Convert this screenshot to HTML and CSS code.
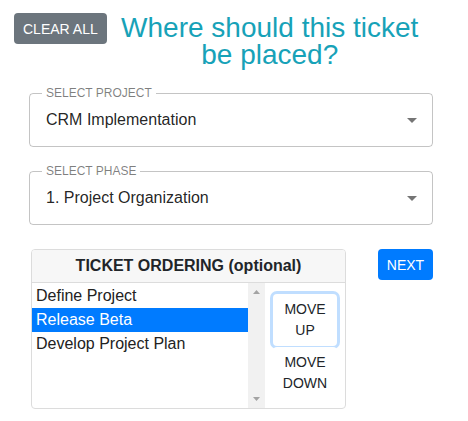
FILE: index.html
```html
<!DOCTYPE html>
<html>
<head>
<meta charset="utf-8">
<link rel="stylesheet" href="styles.css">
</head>
<body>
<div class="top">
  <button class="btn-clear">CLEAR ALL</button>
  <h2 class="title">Where should this ticket be placed?</h2>
</div>
<div class="form">
  <div class="field">
    <span class="field-label">SELECT PROJECT</span>
    <span class="field-value">CRM Implementation</span>
    <svg class="arrow" viewBox="0 0 24 24" width="24" height="24"><path d="M7 10l5 5 5-5z"/></svg>
  </div>
  <div class="field">
    <span class="field-label">SELECT PHASE</span>
    <span class="field-value">1. Project Organization</span>
    <svg class="arrow" viewBox="0 0 24 24" width="24" height="24"><path d="M7 10l5 5 5-5z"/></svg>
  </div>
</div>
<div class="bottom">
  <div class="panel">
    <div class="panel-head">TICKET ORDERING (optional)</div>
    <div class="panel-body">
      <div class="list">
        <div class="items">
          <div class="item">Define Project</div>
          <div class="item selected">Release Beta</div>
          <div class="item">Develop Project Plan</div>
        </div>
        <div class="scrollbar">
          <svg width="17" height="17" viewBox="0 0 17 17"><path d="M5 11h7l-3.5-4z" fill="#a3a3a3"/></svg>
          <svg width="17" height="17" viewBox="0 0 17 17"><path d="M5 6h7l-3.5 4z" fill="#a3a3a3"/></svg>
        </div>
      </div>
      <div class="actions">
        <button class="btn-move focused">MOVE<br>UP</button>
        <button class="btn-move">MOVE<br>DOWN</button>
      </div>
    </div>
  </div>
  <button class="btn-next">NEXT</button>
</div>
</body>
</html>
```
FILE: styles.css
```css
* { box-sizing: border-box; }
body {
  margin: 0;
  font-family: "Liberation Sans", Arial, sans-serif;
  color: #212529;
  background: #fff;
}
button { font-family: inherit; cursor: pointer; }
.top {
  display: flex;
  align-items: flex-start;
  padding: 12px 0 0 14px;
}
.btn-clear {
  margin-top: 1px;
  height: 31px;
  padding: 0 9px;
  border: none;
  border-radius: 4px;
  background: #6c757d;
  color: #fff;
  font-size: 14px;
}
.title {
  margin: 2px 0 0 8px;
  width: 310px;
  text-align: center;
  font-size: 28px;
  line-height: 27px;
  font-weight: normal;
  color: #17a2b8;
}
.form {
  padding: 25px 35px 0 29px;
  display: flex;
  flex-direction: column;
  gap: 24px;
}
.field {
  position: relative;
  height: 54px;
  border: 1px solid rgba(0,0,0,0.23);
  border-radius: 4px;
  display: flex;
  align-items: center;
  padding-left: 16px;
}
.field-label {
  position: absolute;
  top: -8px;
  left: 12px;
  padding: 0 4px;
  background: #fff;
  font-size: 12px;
  line-height: 14px;
  color: rgba(0,0,0,0.5);
}
.field-value {
  font-size: 16px;
  color: rgba(0,0,0,0.87);
}
.arrow {
  position: absolute;
  right: 8px;
  top: 14px;
  fill: rgba(0,0,0,0.54);
}
.bottom {
  display: flex;
  justify-content: space-between;
  align-items: flex-start;
  padding: 24px 35px 0 31px;
}
.panel {
  width: 315px;
  border: 1px solid #dcdcdc;
  border-radius: 4px;
  overflow: hidden;
}
.panel-head {
  height: 33px;
  background: #f7f7f7;
  border-bottom: 1px solid #dcdcdc;
  display: flex;
  align-items: center;
  justify-content: center;
  font-weight: bold;
  font-size: 16px;
}
.panel-body {
  display: flex;
}
.list {
  display: flex;
  width: 233px;
  height: 125px;
}
.items {
  flex: 1;
  padding-top: 1px;
}
.item {
  height: 24px;
  line-height: 24px;
  padding-left: 4px;
  font-size: 16px;
  color: #222;
}
.item.selected {
  background: #007bff;
  color: #fff;
}
.scrollbar {
  width: 17px;
  background: #f1f1f1;
  display: flex;
  flex-direction: column;
  justify-content: space-between;
}
.actions {
  flex: 1;
  display: flex;
  flex-direction: column;
  align-items: center;
  padding-top: 11px;
  gap: 1px;
}
.btn-move {
  width: 64px;
  padding: 4px 0;
  border: 1px solid transparent;
  border-radius: 4px;
  background: #fff;
  color: #212529;
  font-size: 14px;
  line-height: 21px;
}
.btn-move.focused {
  box-shadow: 0 0 0 3px #c0deff;
}
.btn-next {
  height: 31px;
  width: 55px;
  padding: 0;
  border: none;
  border-radius: 4px;
  background: #007bff;
  color: #fff;
  font-size: 14px;
}
```
